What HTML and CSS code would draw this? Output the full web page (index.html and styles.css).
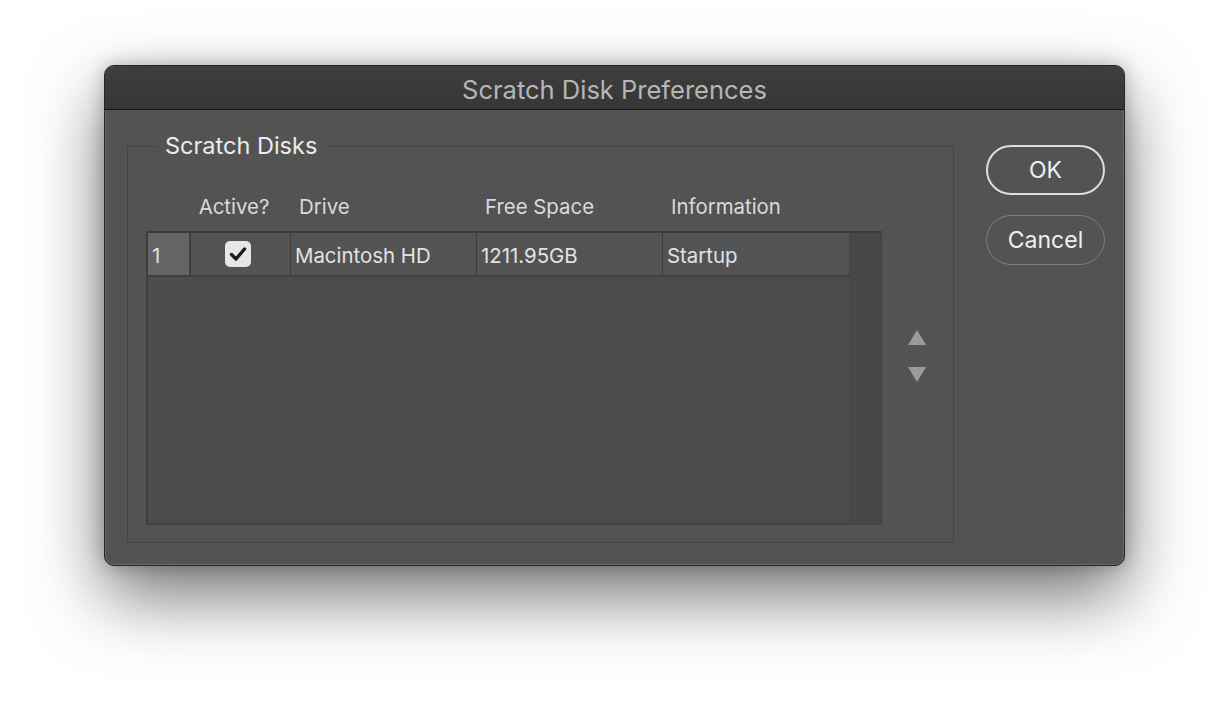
FILE: index.html
```
<!DOCTYPE html>
<html lang="en">
<head>
    <meta charset="UTF-8">
    <title>Scratch Disk Preferences</title>
    <link rel="stylesheet" href="styles.css">
</head>
<body>

<div class="window">
    <!-- Title bar -->
    <div class="titlebar">Scratch Disk Preferences</div>

    <div class="content">
        <fieldset class="group">
            <legend>Scratch Disks</legend>

            <div class="disk-area">
                <div class="disk-table-wrap">
                    <!-- Column headers -->
                    <div class="row header-row">
                        <div class="cell num"></div>
                        <div class="cell active">Active?</div>
                        <div class="cell">Drive</div>
                        <div class="cell">Free Space</div>
                        <div class="cell">Information</div>
                    </div>

                    <div class="disk-table">
                        <div class="table-body">
                            <div class="row disk-row">
                                <div class="cell num">1</div>
                                <div class="cell active">
                                    <span class="checkbox">
                                        <svg width="18" height="16" viewBox="0 0 18 16">
                                            <path d="M2.5 8.5 L7 13 L15.5 3" fill="none" stroke="#1c1c1c" stroke-width="3.4" stroke-linecap="round" stroke-linejoin="round"/>
                                        </svg>
                                    </span>
                                </div>
                                <div class="cell">Macintosh HD</div>
                                <div class="cell">1211.95GB</div>
                                <div class="cell">Startup</div>
                            </div>
                        </div>
                        <div class="scrollbar"></div>
                    </div>
                </div>

                <!-- Move up / down arrows -->
                <div class="arrows">
                    <span class="arrow up"></span>
                    <span class="arrow down"></span>
                </div>
            </div>
        </fieldset>

        <div class="buttons">
            <button class="btn btn-default">OK</button>
            <button class="btn">Cancel</button>
        </div>
    </div>
</div>

</body>
</html>
```

FILE: styles.css
```
body {
    margin: 0;
    padding: 0;
    background-color: #fff;
    font-family: Inter, "Open Sans", Arial, sans-serif;
    height: 704px;
    overflow: hidden;
}
.window {
    margin: 65px 0 0 104px;
    width: 1021px;
    height: 501px;
    box-sizing: border-box;
    background-color: #535353;
    border: 1px solid #262626;
    border-radius: 10px;
    box-shadow: inset 0 0 0 1px #6a6a6a, 0 30px 70px rgba(0, 0, 0, 0.55), 0 0 18px rgba(0, 0, 0, 0.25);
    overflow: hidden;
}
.titlebar {
    height: 43px;
    line-height: 47px;
    text-align: center;
    font-size: 25.5px;
    color: #b6b6b6;
    background: linear-gradient(#3e3e3e, #363636);
    border-bottom: 1px solid #151515;
}
.content {
    display: flex;
    padding: 37px 0 0 22px;
}
.group {
    margin: 0;
    padding: 0;
    box-sizing: border-box;
    width: 827px;
    height: 410px;
    border: 1px solid #444;
    position: relative;
    top: -14px;
}
.group legend {
    margin-left: 28px;
    padding: 0 9px;
    font-size: 23.5px;
    color: #ececec;
    line-height: 26px;
}
.disk-area {
    display: flex;
    padding: 33px 0 0 18px;
}
.row {
    display: flex;
}
.cell {
    box-sizing: border-box;
    width: 186px;
    padding-left: 4px;
    font-size: 20.4px;
    color: #e2e2e2;
}
.cell.num {
    width: 43px;
}
.cell.active {
    width: 100px;
    display: flex;
    justify-content: center;
    padding-left: 0;
}
.header-row {
    height: 37px;
    padding-top: 2px;
}
.header-row .cell {
    padding-left: 10px;
    color: #dadada;
}
.header-row .cell.active {
    padding: 0 10px 0 0;
}
.disk-table {
    display: flex;
    width: 736px;
    height: 294px;
    box-sizing: border-box;
    border-top: 2px solid #3c3c3c;
    border-left: 2px solid #3e3e3e;
    border-bottom: 2px solid #444;
    border-right: 1px solid #444;
    background-color: #4c4c4c;
}
.table-body {
    flex: 1;
}
.disk-row {
    height: 42px;
    border-bottom: 2px solid #3f3f3f;
}
.disk-row .cell {
    background-color: #535353;
    border-right: 1px solid #3c3c3c;
    line-height: 46px;
}
.disk-row .cell:last-child {
    border-right: none;
}
.disk-row .cell.num {
    background-color: #646464;
    border-right: 2px solid #3f3f3f;
}
.disk-row .cell.active {
    align-items: center;
    padding-right: 5px;
}
.checkbox {
    width: 26px;
    height: 26px;
    border-radius: 5px;
    background-color: #e6e6e6;
    display: flex;
    align-items: center;
    justify-content: center;
}
.scrollbar {
    width: 32px;
    background-color: #474747;
}
.arrows {
    width: 70px;
    display: flex;
    flex-direction: column;
    align-items: center;
    padding-top: 138px;
    gap: 22px;
}
.arrow {
    width: 0;
    height: 0;
    border-left: 9px solid transparent;
    border-right: 9px solid transparent;
}
.arrow.up {
    border-bottom: 15px solid #9b9b9b;
}
.arrow.down {
    border-top: 15px solid #9b9b9b;
}
.buttons {
    display: flex;
    flex-direction: column;
    gap: 20px;
    margin: -2px 0 0 32px;
}
.btn {
    width: 119px;
    height: 50px;
    border-radius: 25px;
    background-color: transparent;
    border: 1.5px solid #7c7c7c;
    color: #efefef;
    font-family: Inter, "Open Sans", Arial, sans-serif;
    font-size: 23px;
    cursor: pointer;
}
.btn-default {
    border: 2px solid #dedede;
}
```
